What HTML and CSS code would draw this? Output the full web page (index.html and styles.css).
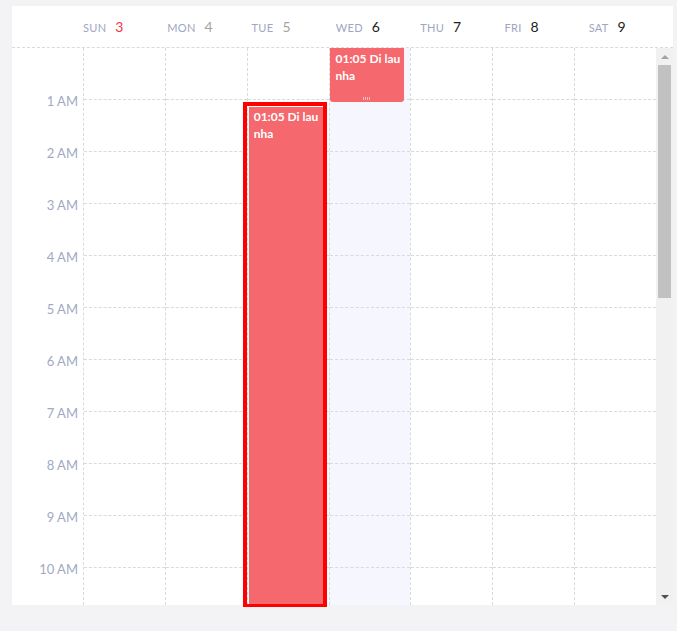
FILE: index.html
```html
<!DOCTYPE html>
<html>
<head>
<meta charset="utf-8">
<link rel="stylesheet" href="styles.css">
</head>
<body>
<div class="cal">
  <div class="head">
    <div class="corner"></div>
    <div class="hd"><span class="dn">SUN</span><span class="num red">3</span></div>
    <div class="hd"><span class="dn">MON</span><span class="num past">4</span></div>
    <div class="hd"><span class="dn">TUE</span><span class="num past">5</span></div>
    <div class="hd"><span class="dn">WED</span><span class="num">6</span></div>
    <div class="hd"><span class="dn">THU</span><span class="num">7</span></div>
    <div class="hd"><span class="dn">FRI</span><span class="num">8</span></div>
    <div class="hd"><span class="dn">SAT</span><span class="num">9</span></div>
  </div>
  <div class="main">
    <div class="gutter">
      <div class="tl">1 AM</div>
      <div class="tl">2 AM</div>
      <div class="tl">3 AM</div>
      <div class="tl">4 AM</div>
      <div class="tl">5 AM</div>
      <div class="tl">6 AM</div>
      <div class="tl">7 AM</div>
      <div class="tl">8 AM</div>
      <div class="tl">9 AM</div>
      <div class="tl">10 AM</div>
    </div>
    <div class="days">
      <div class="col"><div class="slot"></div><div class="slot"></div><div class="slot"></div><div class="slot"></div><div class="slot"></div><div class="slot"></div><div class="slot"></div><div class="slot"></div><div class="slot"></div><div class="slot"></div><div class="slot"></div></div>
      <div class="col"><div class="slot"></div><div class="slot"></div><div class="slot"></div><div class="slot"></div><div class="slot"></div><div class="slot"></div><div class="slot"></div><div class="slot"></div><div class="slot"></div><div class="slot"></div><div class="slot"></div></div>
      <div class="col"><div class="slot"></div><div class="slot"></div><div class="slot"></div><div class="slot"></div><div class="slot"></div><div class="slot"></div><div class="slot"></div><div class="slot"></div><div class="slot"></div><div class="slot"></div><div class="slot"></div>
        <div class="event ev-tue">01:05 Di lau nha</div>
      </div>
      <div class="col today"><div class="slot"></div><div class="slot"></div><div class="slot"></div><div class="slot"></div><div class="slot"></div><div class="slot"></div><div class="slot"></div><div class="slot"></div><div class="slot"></div><div class="slot"></div><div class="slot"></div>
        <div class="event ev-wed">01:05 Di lau nha<span class="grip"></span></div>
      </div>
      <div class="col"><div class="slot"></div><div class="slot"></div><div class="slot"></div><div class="slot"></div><div class="slot"></div><div class="slot"></div><div class="slot"></div><div class="slot"></div><div class="slot"></div><div class="slot"></div><div class="slot"></div></div>
      <div class="col"><div class="slot"></div><div class="slot"></div><div class="slot"></div><div class="slot"></div><div class="slot"></div><div class="slot"></div><div class="slot"></div><div class="slot"></div><div class="slot"></div><div class="slot"></div><div class="slot"></div></div>
      <div class="col"><div class="slot"></div><div class="slot"></div><div class="slot"></div><div class="slot"></div><div class="slot"></div><div class="slot"></div><div class="slot"></div><div class="slot"></div><div class="slot"></div><div class="slot"></div><div class="slot"></div></div>
    </div>
    <div class="sb">
      <div class="sb-btn"><span class="tri-up"></span></div>
      <div class="sb-thumb"></div>
      <div class="sb-space"></div>
      <div class="sb-btn"><span class="tri-down"></span></div>
    </div>
  </div>
  <div class="selbox"></div>
</div>
</body>
</html>
```

FILE: styles.css
```css
* { box-sizing: border-box; }
html, body { margin: 0; padding: 0; }
body {
  background: #f3f3f5;
  font-family: "Lato", "Liberation Sans", sans-serif;
  width: 677px;
  height: 631px;
  overflow: hidden;
}
.cal {
  position: relative;
  margin: 6px 0 0 12px;
  width: 661px;
  height: 599px;
  background: #fff;
}
.head {
  display: grid;
  grid-template-columns: 71px repeat(7, 1fr);
  height: 42px;
  border-bottom: 1px dashed #dadada;
}
.hd {
  display: flex;
  align-items: baseline;
  padding-top: 12px;
}
.dn {
  font-size: 11px;
  color: #9ea6c2;
  margin-right: 9px;
  letter-spacing: 0.3px;
}
.num {
  font-size: 14px;
  color: #222;
}
.num.red { color: #f5333f; }
.num.past { color: #a3a3a3; }
.main {
  display: flex;
  height: 557px;
  overflow: hidden;
}
.gutter {
  width: 71px;
  flex: none;
  padding-top: 45px;
}
.tl {
  height: 52px;
  line-height: 16px;
  font-size: 13px;
  color: #a2a9c3;
  text-align: right;
  padding-right: 5px;
}
.days {
  flex: 1;
  display: grid;
  grid-template-columns: repeat(7, 1fr);
  align-items: start;
}
.col {
  position: relative;
  border-left: 1px dashed #dadada;
}
.col.today { background: #f5f6fe; }
.slot {
  height: 52px;
  border-bottom: 1px dashed #dadada;
}
.event {
  position: absolute;
  background: #f4686e;
  color: #fff;
  font-weight: 700;
  font-size: 12px;
  line-height: 17px;
  padding: 2px 0 2px 6px;
}
.ev-wed {
  top: 0;
  left: 0;
  width: 74px;
  height: 54px;
  border-radius: 0 0 3px 3px;
}
.grip {
  position: absolute;
  left: 33px;
  bottom: 2px;
  width: 8px;
  height: 3px;
  background-image: repeating-linear-gradient(90deg, rgba(255,255,255,0.55) 0 1px, transparent 1px 2px);
}
.ev-tue {
  top: 58px;
  left: 0;
  width: 77px;
  height: 520px;
  border: 1px solid #fff;
  border-right-width: 2px;
  padding: 1px 0 1px 5px;
}
.sb {
  width: 17px;
  flex: none;
  background: #f1f1f1;
  display: flex;
  flex-direction: column;
}
.sb-btn {
  height: 17px;
  display: flex;
  align-items: center;
  justify-content: center;
}
.tri-up {
  width: 0; height: 0;
  border-left: 4px solid transparent;
  border-right: 4px solid transparent;
  border-bottom: 4px solid #a3a3a3;
}
.tri-down {
  width: 0; height: 0;
  border-left: 4px solid transparent;
  border-right: 4px solid transparent;
  border-top: 4px solid #505050;
}
.sb-thumb {
  height: 233px;
  margin: 0 2px;
  background: #c1c1c1;
}
.sb-space { flex: 1; }
.selbox {
  position: absolute;
  left: 231px;
  top: 96px;
  width: 84px;
  height: 505px;
  border: 4px solid #ff0000;
  border-bottom-width: 3px;
}
```
